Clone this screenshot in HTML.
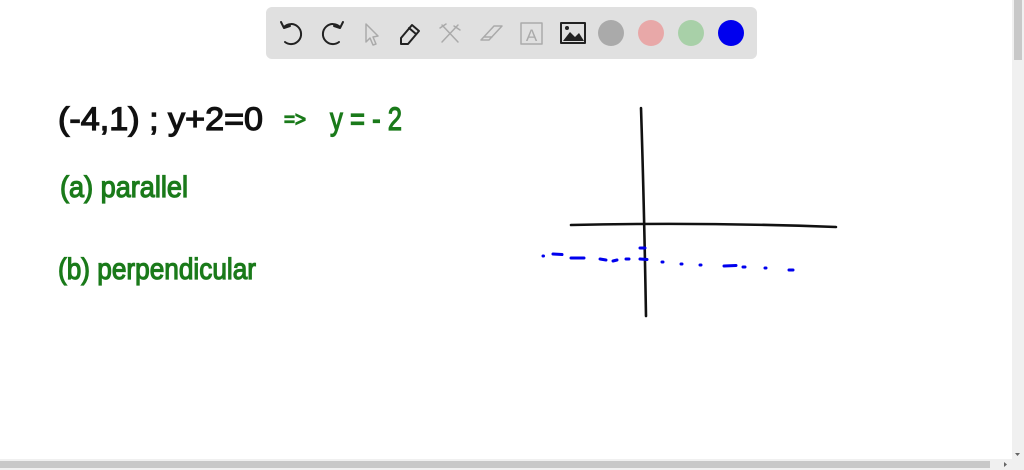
<!DOCTYPE html>
<html><head><style>
html,body{margin:0;padding:0;width:1024px;height:470px;overflow:hidden;background:#fff}
svg{display:block}
text{font-family:"Liberation Sans",sans-serif}
</style></head><body>
<svg width="1024" height="470" viewBox="0 0 1024 470" xmlns="http://www.w3.org/2000/svg">
<rect width="1024" height="470" fill="#fff"/>
<rect x="266" y="7" width="491" height="52" rx="6" fill="#e0e0e0"/>
<g fill="none" stroke="#222" stroke-width="2" stroke-linecap="round" stroke-linejoin="round">
<path d="M284 27 A10 10 0 1 1 285 42"/><path d="M281 22 L284 28 L290 26"/>
<path d="M340 27 A10 10 0 1 0 339 42"/><path d="M343 22 L340 28 L334 26"/>
<path d="M401 38 L412 25 L419 31 L408 44 L401 44 Z M409 28 L416 34"/>
<rect x="561" y="23" width="24" height="20"/>
</g>
<path d="M563 41 L570 32 L575 37 L579 33 L584 41 Z" fill="#222"/><circle cx="567" cy="28" r="2" fill="#222"/>
<g fill="none" stroke="#aaa" stroke-width="1.5" stroke-linecap="round" stroke-linejoin="round">
<path d="M366 24 L366 42 L370 38 L373 45 L376 44 L373 37 L378 36 Z"/>
<path d="M442 25 L458 42 M458 25 L442 42 M440 28 L446 24 M454 26 L460 30"/>
<path d="M481 40 L494 26 L502 26 L489 40 Z M484 37 L492 37"/>
<rect x="521" y="23" width="21" height="21"/>
</g>
<text x="531.5" y="41" font-size="17" fill="#aaa" text-anchor="middle">A</text>
<circle cx="611" cy="33" r="13" fill="#aaa"/>
<circle cx="651" cy="33" r="13" fill="#e8a8a8"/>
<circle cx="691" cy="33" r="13" fill="#a8d0a8"/>
<circle cx="731" cy="33" r="13" fill="#0000ee"/>
<g stroke-width="1.2">
<text x="58" y="130" font-size="32" fill="#111" stroke="#111" textLength="205" lengthAdjust="spacingAndGlyphs">(-4,1)  ;  y+2=0</text>
<text x="284" y="126" font-size="20" fill="#1a7a1a" stroke="#1a7a1a" textLength="22" lengthAdjust="spacingAndGlyphs">=&gt;</text>
<text x="330" y="130" font-size="32" fill="#1a7a1a" stroke="#1a7a1a" textLength="72" lengthAdjust="spacingAndGlyphs">y = - 2</text>
<text x="60" y="197" font-size="30" fill="#1a7a1a" stroke="#1a7a1a" textLength="128" lengthAdjust="spacingAndGlyphs">(a) parallel</text>
<text x="58" y="279" font-size="30" fill="#1a7a1a" stroke="#1a7a1a" textLength="198" lengthAdjust="spacingAndGlyphs">(b) perpendicular</text>
</g>
<g fill="none" stroke="#111" stroke-width="2.6" stroke-linecap="round">
<path d="M641 108 Q644 200 646 316"/>
<path d="M571 225 Q700 222 836 227"/>
</g>
<g fill="none" stroke="#0000ee" stroke-width="3" stroke-linecap="round">
<path d="M543 256 L543.5 256 M553 254 L562 254.5 M571 258 L584 258 M600 259 L606 260 M613 261 L617 260 M626 259 L629 259 M640 248 L645 248 M640 259 L647 259.5 M662 262 L663 262 M681 264 L682 264 M700 265 L701 265 M724 266 L736 265.5 M743 267 L745 267 M765 268 L766 268 M789 270 L793 270"/>
</g>
<rect x="1012" y="0" width="12" height="470" fill="#f0f0f0"/>
<rect x="1014" y="0" width="8" height="60" fill="#c8c8c8"/>
<rect x="0" y="459" width="1024" height="11" fill="#f0f0f0"/>
<rect x="0" y="461" width="990" height="7" fill="#c8c8c8"/>
<path d="M1015 453 L1020 453 L1017.5 456 Z" fill="#666"/>
<path d="M1004 462 L1007 464.5 L1004 467 Z" fill="#666"/>
</svg>
</body></html>
